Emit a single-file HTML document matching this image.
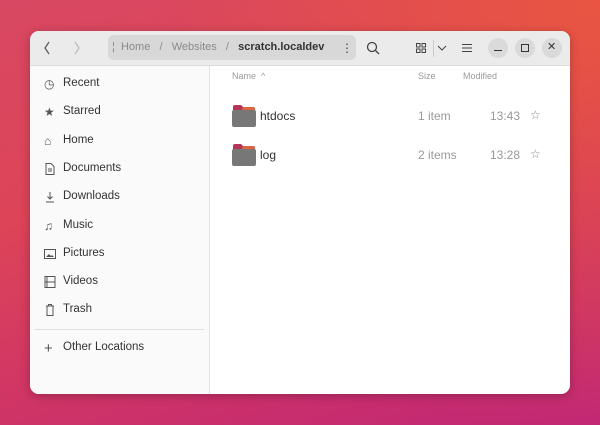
<!DOCTYPE html>
<html><head><meta charset="utf-8"><style>
*{margin:0;padding:0;box-sizing:border-box}
body{width:600px;height:425px;overflow:hidden;font-family:"Liberation Sans","DejaVu Sans",sans-serif;
background:linear-gradient(160deg,#d84862 0%,#dd4458 35%,#cf3466 65%,#c02676 100%);position:relative}
.bg2{position:absolute;inset:0;background:radial-gradient(circle at 100% 0%,rgba(236,90,60,.8),rgba(236,90,60,0) 60%)}
.win{position:absolute;left:30px;top:31px;width:540px;height:363px;background:#fff;border-radius:9px;overflow:hidden;box-shadow:0 2px 10px rgba(0,0,0,.25)}
.hdr{position:absolute;left:0;top:0;width:540px;height:35px;background:#ebebeb;border-bottom:1px solid #dcdcdc}
.side{position:absolute;left:0;top:35px;width:180px;height:328px;background:#fafafa;border-right:1px solid #e2e2e2}
.path{position:absolute;left:78px;top:4px;width:248px;height:25px;background:#d8d8d8;border-radius:6px;font-size:11px;color:#8a8a8a;line-height:25px;padding-left:4px;white-space:nowrap}
.path b{color:#333;font-weight:bold}
.it{position:absolute;left:33px;font-size:11.5px;color:#333}
.ic{position:absolute;left:14px;width:12px;height:12px;color:#555;font-size:12px;line-height:12px}
.btn{position:absolute;top:7px;width:20px;height:20px;border-radius:50%;background:#dadada}
.col{position:absolute;top:40px;font-size:9px;color:#9a9a9a}
.row{position:absolute;font-size:12px}
.fold{position:absolute;width:24px;height:23px}
</style></head><body><div class="bg2"></div>
<div class="win">
<div class="hdr">
 <svg style="position:absolute;left:12px;top:10px" width="10" height="14"><path d="M7 1 3 7 7 13" stroke="#555" fill="none" stroke-width="1.2"/></svg>
 <svg style="position:absolute;left:42px;top:10px" width="10" height="14"><path d="M3 1 7 7 3 13" stroke="#bbb" fill="none" stroke-width="1.2"/></svg>
 <div class="path">¦ &nbsp;Home &nbsp;&nbsp;/&nbsp;&nbsp; Websites &nbsp;&nbsp;/&nbsp;&nbsp; <b>scratch.localdev</b></div>
 <div style="position:absolute;left:311px;top:10px;font-size:12px;color:#444">⋮</div>
 <svg style="position:absolute;left:336px;top:10px" width="14" height="14"><circle cx="6" cy="6" r="4.5" stroke="#444" fill="none" stroke-width="1.3"/><path d="M9.5 9.5 13 13" stroke="#444" stroke-width="1.3"/></svg>
 <svg style="position:absolute;left:386px;top:12px" width="10" height="10"><g fill="none" stroke="#444"><rect x=".5" y=".5" width="3.5" height="3.5"/><rect x="6" y=".5" width="3.5" height="3.5"/><rect x=".5" y="6" width="3.5" height="3.5"/><rect x="6" y="6" width="3.5" height="3.5"/></g></svg>
 <div style="position:absolute;left:403px;top:9px;width:1px;height:17px;background:#ccc"></div>
 <svg style="position:absolute;left:407px;top:14px" width="10" height="6"><path d="M1 1 5 5 9 1" stroke="#444" fill="none"/></svg>
 <svg style="position:absolute;left:432px;top:12px" width="10" height="10"><path d="M0 1.5h10M0 5h10M0 8.5h10" stroke="#444"/></svg>
 <div class="btn" style="left:458px"></div><div style="position:absolute;left:464px;top:19px;width:8px;height:1.3px;background:#333"></div>
 <div class="btn" style="left:485px"></div><div style="position:absolute;left:491px;top:13px;width:8px;height:8px;border:1.3px solid #333"></div>
 <div class="btn" style="left:512px"></div><div style="position:absolute;left:517px;top:9px;font-size:11px;color:#333">✕</div>
</div>
<div class="side">
 <div class="ic" style="top:12px">◷</div><div class="it" style="top:11px">Recent</div>
 <div class="ic" style="top:40px">★</div><div class="it" style="top:39px">Starred</div>
 <div class="ic" style="top:69px">⌂</div><div class="it" style="top:68px">Home</div>
 <svg class="ic" style="top:97px" viewBox="0 0 12 12"><path d="M2 .5h5l3 3v8H2z M4 6h4M4 8h4" fill="none" stroke="#555"/></svg><div class="it" style="top:96px">Documents</div>
 <svg class="ic" style="top:125px" viewBox="0 0 12 12"><path d="M6 1v7M3.5 5.5 6 8l2.5-2.5M2 11h8" fill="none" stroke="#555"/></svg><div class="it" style="top:124px">Downloads</div>
 <div class="ic" style="top:154px">♫</div><div class="it" style="top:153px">Music</div>
 <svg class="ic" style="top:182px" viewBox="0 0 12 12"><rect x=".5" y="1.5" width="11" height="9" fill="none" stroke="#555"/><path d="M2 9l3-3 2 2 1-1 2 2z" fill="#555"/></svg><div class="it" style="top:181px">Pictures</div>
 <svg class="ic" style="top:210px" viewBox="0 0 12 12"><rect x="1" y=".5" width="10" height="11" fill="none" stroke="#555"/><path d="M1 6h10M3 .5v11" stroke="#555"/></svg><div class="it" style="top:209px">Videos</div>
 <svg class="ic" style="top:238px" viewBox="0 0 12 12"><path d="M2 2h8M4.5 2V.5h3V2M3 2v9.5h6V2" fill="none" stroke="#555"/></svg><div class="it" style="top:237px">Trash</div>
 <div style="position:absolute;left:4px;top:263px;width:170px;height:1px;background:#e0e0e0"></div>
 <div class="ic" style="top:277px;font-size:15px">+</div><div class="it" style="top:275px">Other Locations</div>
</div>
<div class="col" style="left:202px">Name &nbsp;^</div>
<div class="col" style="left:388px">Size</div>
<div class="col" style="left:433px">Modified</div>
<svg class="fold" style="left:202px;top:73px" viewBox="0 0 24 23"><path d="M1 3a2 2 0 0 1 2-2h6l2 2h10a2 2 0 0 1 2 2v3H1z" fill="#b5345a"/><path d="M11 3h10a2 2 0 0 1 2 2v3H9z" fill="#d9663f"/><rect x="0" y="6" width="24" height="17" rx="2" fill="#777"/></svg>
<div class="row" style="left:230px;top:78px;color:#333">htdocs</div>
<div class="row" style="left:388px;top:78px;color:#999">1 item</div>
<div class="row" style="left:460px;top:78px;color:#999">13:43</div>
<div class="row" style="left:500px;top:77px;color:#888">☆</div>
<svg class="fold" style="left:202px;top:112px" viewBox="0 0 24 23"><path d="M1 3a2 2 0 0 1 2-2h6l2 2h10a2 2 0 0 1 2 2v3H1z" fill="#b5345a"/><path d="M11 3h10a2 2 0 0 1 2 2v3H9z" fill="#d9663f"/><rect x="0" y="6" width="24" height="17" rx="2" fill="#777"/></svg>
<div class="row" style="left:230px;top:117px;color:#333">log</div>
<div class="row" style="left:388px;top:117px;color:#999">2 items</div>
<div class="row" style="left:460px;top:117px;color:#999">13:28</div>
<div class="row" style="left:500px;top:116px;color:#888">☆</div>
</div>
</body></html>
